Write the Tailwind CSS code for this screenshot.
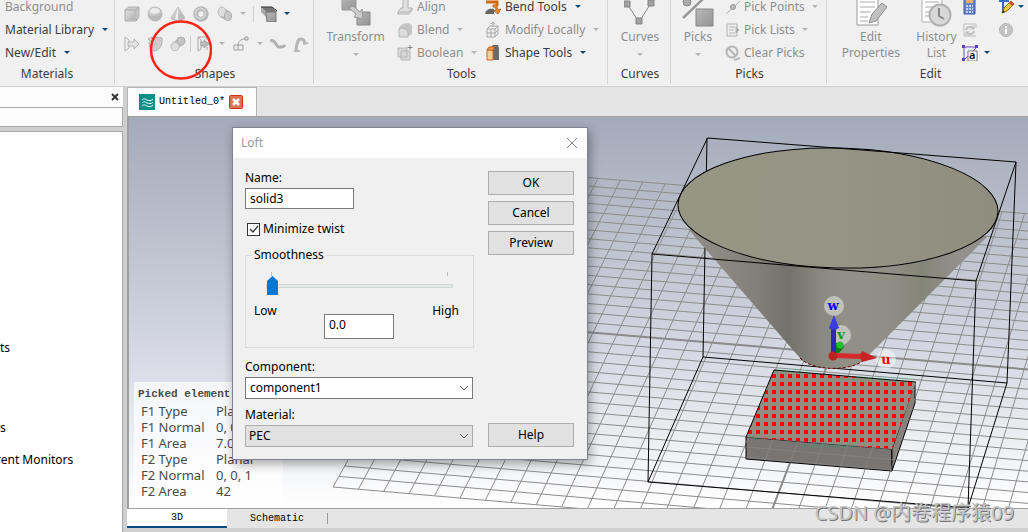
<!DOCTYPE html>
<html lang="en">
<head>
<meta charset="utf-8">
<title>Untitled_0</title>
<script src="https://cdn.jsdelivr.net/npm/@tailwindcss/browser@4"></script>
</head>
<body class="font-['Noto_Sans',sans-serif] text-xs text-[#3c3c3c]">
<svg class="absolute size-0" aria-hidden="true">
  <defs>
    <linearGradient id="g" x1="0" y1="0" x2="1" y2="1"><stop offset="0" stop-color="#dedede"/><stop offset="1" stop-color="#b0b0b0"/></linearGradient>
    <linearGradient id="gd" x1="0" y1="0" x2="1" y2="1"><stop offset="0" stop-color="#b8b8b8"/><stop offset="1" stop-color="#949494"/></linearGradient>
    <symbol id="caret" viewBox="0 0 6 4"><path d="M0 0h6L3 3z" fill="currentColor"/></symbol>
  </defs>
</svg>
<div class="relative flex h-screen flex-col overflow-hidden bg-[#cfcfcf]">

  <!-- Ribbon -->
  <header class="flex h-[87px] shrink-0 items-end overflow-hidden border-b border-[#d0d0d0] bg-[#f0f0f0] pb-0.5 whitespace-nowrap">
    <section class="flex w-[115px] shrink-0 flex-col border-r border-[#d4d4d4]">
      <button class="flex h-[23px] items-center pl-[5px] text-[#8e8e8e]">Background</button>
      <button class="flex h-[23px] items-center gap-2 pl-[5px]">Material Library <svg class="h-1 w-1.5 text-[#0b4a73]"><use href="#caret"/></svg></button>
      <button class="flex h-[23px] items-center gap-2 pl-[5px]">New/Edit <svg class="h-1 w-1.5 text-[#0b4a73]"><use href="#caret"/></svg></button>
      <h2 class="h-5 pr-5 text-center leading-5">Materials</h2>
    </section>

    <section class="flex w-[199px] shrink-0 flex-col border-r border-[#d4d4d4]">
      <div class="flex h-[30px] items-center gap-[7px] pl-[9px]">
        <button aria-label="Brick"><svg class="size-4" viewBox="0 0 16 16"><path d="M1 4l4-3h10v10l-3 4H1z" fill="#ccc" stroke="#adadad"/><path d="M2 5h9v9H2z" fill="url(#g)"/><path d="M1 4h11v11M12 4l3-3" fill="none" stroke="#aaa"/></svg></button>
        <button aria-label="Sphere"><svg class="size-4" viewBox="0 0 16 16"><circle cx="8" cy="8" r="7" fill="url(#g)" stroke="#b8b8b8"/><path d="M1 8c3 3 11 3 14 0-1 9-13 9-14 0z" fill="#b8b8b8"/><ellipse cx="8" cy="5" rx="5" ry="3" fill="#ececec"/></svg></button>
        <button aria-label="Cone"><svg class="size-4" viewBox="0 0 16 16"><path d="M8 1l7 11c-2 3-12 3-14 0z" fill="url(#g)" stroke="#bdbdbd"/><path d="M8 1L5 13l3 1z" fill="#efefef"/></svg></button>
        <button aria-label="Torus"><svg class="size-4" viewBox="0 0 16 16"><circle cx="8" cy="8" r="5.200" fill="none" stroke="#b6b6b6" stroke-width="5"/><circle cx="7.500" cy="7.500" r="5" fill="none" stroke="#d2d2d2" stroke-width="2"/></svg></button>
        <button aria-label="Cylinder" class="ml-px"><svg class="size-4" viewBox="0 0 16 16"><path d="M5 1l7 4c4 4 0 10-4 9L3 11z" fill="#bdbdbd"/><ellipse cx="5" cy="6" rx="4" ry="5" fill="#ddd" stroke="#bbb"/><ellipse cx="11" cy="10" rx="3.500" ry="4.500" fill="#c9c9c9" stroke="#b0b0b0"/></svg></button>
        <svg class="h-1 w-1.5 text-[#b5b5b5]"><use href="#caret"/></svg>
        <i class="h-4 w-px bg-[#cfcfcf]"></i>
        <button aria-label="Extrude face" class="flex items-center gap-[7px]"><svg class="size-4" viewBox="0 0 16 16"><path d="M0 1h11l5 5H5z" fill="#777"/><path d="M0 1l5 5v5L0 6z" fill="#aaa"/><path d="M5 6h10v10H6z" fill="url(#gd)" stroke="#777"/><path d="M0 1h11l5 4" fill="none" stroke="#333"/></svg><svg class="h-1 w-1.5 text-[#0b4a73]"><use href="#caret"/></svg></button>
      </div>
      <div class="flex h-[30px] items-center gap-[7px] pl-[9px]">
        <button aria-label="Extrude"><svg class="size-4" viewBox="0 0 16 16" fill="none" stroke="#b0b0b0"><path d="M1 1l4 3v8l-4 3z"/><path d="M4 6h6V3l5 5-5 5v-3H4z" fill="#e4e4e4"/></svg></button>
        <button aria-label="Rotate"><svg class="size-4" viewBox="0 0 16 16" fill="#cdcdcd" stroke="#b4b4b4"><path d="M2 6c1 4 5 4 6 1V4H6l4-3 5 1v5c-2 8-9 10-12 6z"/><path d="M1 3l4-2 2 2-3 3z"/></svg></button>
        <button aria-label="Loft"><svg class="size-4" viewBox="0 0 16 16"><path d="M2 7l7-5 5 6-7 5z" fill="#b8b8b8"/><circle cx="11" cy="5" r="4" fill="#c6c6c6" stroke="#acacac"/><circle cx="5" cy="10.500" r="4.200" fill="#dedede" stroke="#bababa"/></svg></button>
        <i class="-mx-[3px] h-4 w-px bg-[#cfcfcf]"></i>
        <button aria-label="Shell" class="flex items-center gap-2"><svg class="size-4" viewBox="0 0 16 16" fill="none" stroke="#a8a8a8"><path d="M3 1v14l3-2V4zM3 1h9v3M12 11v3"/><path d="M6 6h3V4l5 4-5 4v-2H6z" fill="#bbb"/></svg><svg class="h-1 w-1.5 text-[#b5b5b5]"><use href="#caret"/></svg></button>
        <button aria-label="Curve sweep" class="ml-px flex items-center gap-2"><svg class="size-4" viewBox="0 0 16 16" fill="none" stroke="#9e9e9e"><path d="M5 10c0-5 3-7 7-7M1 9h9v5H1zM5 9v5"/><path d="M12 1h3v3h-3z" fill="#ddd"/></svg><svg class="h-1 w-1.5 text-[#b5b5b5]"><use href="#caret"/></svg></button>
        <button aria-label="Wire"><svg class="size-4" viewBox="0 0 16 16" fill="none"><path d="M0 5c5-3 6 6 9 6 3 0 5 0 6-2" stroke="#b0b0b0" stroke-width="3"/></svg></button>
        <button aria-label="Bond wire"><svg class="size-4" viewBox="0 0 16 16" fill="none"><path d="M3 14C4 6 5 3 8 3c3 0 3 2 4 4" stroke="#b4b4b4" stroke-width="3"/><path d="M1 15h6M10 8l5-1" stroke="#bbb" stroke-width="2"/></svg></button>
      </div>
      <div class="h-[5px]"></div>
      <h2 class="h-5 pl-0.5 text-center leading-5">Shapes</h2>
    </section>

    <section class="flex w-[294px] shrink-0 flex-col border-r border-[#d4d4d4]">
      <div class="flex text-[#8e8e8e]">
        <button class="flex h-[69px] w-[83px] flex-col items-center leading-4">
          <svg class="h-8 w-8" viewBox="0 0 32 32"><path d="M2 1h14v14H2z" fill="url(#gd)" stroke="#999"/><path d="M17 17h13v13H17z" fill="url(#gd)" stroke="#888"/><path d="M13 11l7 6 2-3 1 10-9-2 2-3-7-6z" fill="#ccc" stroke="#999"/></svg>
          <span class="mt-0.5">Transform</span> <svg class="mt-2 h-1 w-1.5 text-[#b5b5b5]"><use href="#caret"/></svg></button>
        <div class="w-[88px]">
          <button class="flex h-[23px] items-center gap-1"><svg class="size-4" viewBox="0 0 16 16" fill="#e0e0e0" stroke="#b0b0b0"><path d="M6 0v9H4l-3 4v2h11l3-4V9h-4V0z"/><path d="M1 13h11l3-4"/></svg>Align</button>
          <button class="flex h-[23px] items-center gap-1"><svg class="size-4" viewBox="0 0 16 16"><path d="M2 6c2-5 9-6 13-3v9l-5 3H2z" fill="#c4c4c4"/><path d="M2 7c3-2 7-1 9 3v5H2z" fill="#dcdcdc" stroke="#b4b4b4"/></svg>Blend<svg class="ml-1 h-1 w-1.5 text-[#b5b5b5]"><use href="#caret"/></svg></button>
          <button class="flex h-[23px] items-center gap-1"><svg class="size-4" viewBox="0 0 16 16" fill="#d8d8d8" stroke="#b8b8b8"><path d="M1 3h9v9H1zM4 6h9v9H4z"/><path d="M13 0v5M10.500 2.500h5" stroke="#888"/></svg>Boolean<svg class="ml-1 h-1 w-1.5 text-[#b5b5b5]"><use href="#caret"/></svg></button>
        </div>
        <div>
          <button class="flex h-[23px] items-center gap-1 text-[#3c3c3c]"><svg class="size-4" viewBox="0 0 16 16"><path d="M0 15c1-5 5-6 9-5v5z" fill="#666"/><path d="M1 3h11v4" fill="none" stroke="#d06b10" stroke-width="3"/><path d="M8 6c4-1 5 3 5 5l3-1-3 5-4-3 2-1c0-2-1-3-3-3z" fill="#e98a2b" stroke="#a8500b" stroke-width=".7"/></svg>Bend Tools<svg class="ml-1 h-1 w-1.5 text-[#0b4a73]"><use href="#caret"/></svg></button>
          <button class="flex h-[23px] items-center gap-1"><svg class="size-4" viewBox="0 0 16 16" fill="none" stroke="#a8a8a8"><path d="M2 7h8v8H2zM2 7l3-3h8v8l-3 3M10 7l3-3M2 11h8l3-3M6 7v8M8 0v5M6 2l2-2 2 2"/></svg>Modify Locally<svg class="ml-1 h-1 w-1.5 text-[#b5b5b5]"><use href="#caret"/></svg></button>
          <button class="flex h-[23px] items-center gap-1 text-[#3c3c3c]"><svg class="size-4" viewBox="0 0 16 16"><path d="M6 2l2-2h5l1 3v12H8z" fill="#6b6b6b"/><path d="M2 5h6v10H2z" fill="#f4cf95" stroke="#d2691e"/><path d="M2 5l2-3h6L8 5z" fill="#f2a04e" stroke="#c85f12"/></svg>Shape Tools<svg class="ml-1 h-1 w-1.5 text-[#0b4a73]"><use href="#caret"/></svg></button>
        </div>
      </div>
      <h2 class="h-5 pl-0.5 text-center leading-5">Tools</h2>
    </section>

    <section class="flex w-[63px] shrink-0 flex-col border-r border-[#d4d4d4]">
      <button class="flex h-[69px] flex-col items-center pl-0.5 leading-4 text-[#8e8e8e]">
        <svg class="h-8 w-8" viewBox="0 0 32 32" fill="#a2a2a2" stroke="#858585"><path d="M3 9l12 18L27 8" fill="none"/><path d="M0 6h6v6H0zM24 5h6v6h-6zM12 23h6v6h-6z"/></svg>
        <span class="mt-0.5">Curves</span> <svg class="mt-2 h-1 w-1.5 text-[#b5b5b5]"><use href="#caret"/></svg></button>
      <h2 class="h-5 pl-0.5 text-center leading-5">Curves</h2>
    </section>

    <section class="flex w-[156px] shrink-0 flex-col border-r border-[#d4d4d4]">
      <div class="flex text-[#8e8e8e]">
        <button class="flex h-[69px] w-[54px] flex-col items-center leading-4">
          <svg class="h-8 w-8" viewBox="0 0 32 32"><path d="M1 23L22 3" stroke="#999" stroke-width="2.500"/><circle cx="5" cy="7" r="4" fill="#aaa" stroke="#888"/><path d="M14 14h17v17H14z" fill="url(#gd)" stroke="#888"/></svg>
          <span class="mt-0.5">Picks</span> <svg class="mt-2 h-1 w-1.5 text-[#b5b5b5]"><use href="#caret"/></svg></button>
        <div>
          <button class="flex h-[23px] items-center gap-[3px]"><svg class="size-4" viewBox="0 0 16 16"><path d="M1 15L15 2" stroke="#b0b0b0"/><circle cx="8" cy="8" r="2.500" fill="#bbb" stroke="#999"/></svg>Pick Points<svg class="ml-1 h-1 w-1.5 text-[#b5b5b5]"><use href="#caret"/></svg></button>
          <button class="flex h-[23px] items-center gap-[3px]"><svg class="size-4" viewBox="0 0 16 16" fill="#eee" stroke="#b4b4b4"><path d="M2 2h10v12H2zM4 5h6M4 8h5M4 11h6"/><path d="M11 5l3 3-3 3z" fill="#aaa"/></svg>Pick Lists<svg class="ml-1 h-1 w-1.5 text-[#b5b5b5]"><use href="#caret"/></svg></button>
          <button class="flex h-[23px] items-center gap-[3px]"><svg class="size-4" viewBox="0 0 16 16" fill="none"><path d="M9 15l6-2" stroke="#bbb" stroke-width="2"/><circle cx="7" cy="7" r="5.500" fill="#eee" stroke="#b4b4b4" stroke-width="2"/><path d="M3 3l8 8" stroke="#b4b4b4" stroke-width="2"/></svg>Clear Picks</button>
        </div>
      </div>
      <h2 class="h-5 pl-0.5 text-center leading-5">Picks</h2>
    </section>

    <section class="flex w-[207px] shrink-0 flex-col">
      <div class="flex text-center leading-4 text-[#8e8e8e]">
        <button class="flex h-[69px] w-[88px] flex-col items-center">
          <svg class="h-8 w-8" viewBox="0 0 32 32"><path d="M2 1h21v29H2z" fill="#fff" stroke="#999"/><path d="M5 7h15M5 12h15M5 17h11M5 22h8M5 26h8" stroke="#aaa"/><path d="M14 28l3-9L27 8l5 4-11 14z" fill="#c0c0c0" stroke="#8c8c8c"/></svg>
          <span class="mt-0.5">Edit<br>Properties</span></button>
        <button class="flex h-[69px] w-11 flex-col items-center">
          <svg class="h-8 w-8" viewBox="0 0 32 32"><path d="M2 1h20v26H2z" fill="#fff" stroke="#b0b0b0"/><path d="M5 7h14M5 12h10M5 17h5M5 21h5" stroke="#aaa"/><circle cx="20" cy="20" r="10.500" fill="#d8d8d8" stroke="#b0b0b0" stroke-width="2"/><path d="M19 13v8l5 3" fill="none" stroke="#888" stroke-width="2"/></svg>
          <span class="mt-0.5">History<br>List</span></button>
        <div class="grid grid-cols-2 gap-x-4 pl-1">
          <button aria-label="Calculator" class="flex h-[23px] items-center"><svg class="size-4" viewBox="0 0 16 16"><path d="M2 0h11v15H2z" fill="#6683c4" stroke="#43599a"/><path d="M4 1h7v3H4z" fill="#f2b066"/><path d="M4 7h7M4 10h7M4 13h7" stroke="#e4ebfb" stroke-width="1.500" stroke-dasharray="2 1"/></svg></button>
          <button aria-label="Edit text" class="-ml-2 flex h-[23px] items-center gap-1"><svg class="size-4 shrink-0" viewBox="0 0 16 16"><path d="M1 2h10M5 2v10" stroke="#356ac1" stroke-width="2"/><path d="M4 14l2-5 7-7 3 3-7 7z" fill="#f0c93a" stroke="#8c6b20"/><path d="M13 2l3 3-2 2-3-3z" fill="#d4483b"/><path d="M4 14l1-3 2 2z" fill="#222"/></svg><svg class="h-1 w-1.5 shrink-0 text-[#0b4a73]"><use href="#caret"/></svg></button>
          <button aria-label="Update" class="flex h-[23px] items-center"><svg class="size-4" viewBox="0 0 16 16" fill="none" stroke="#bdbdbd"><path d="M2 2v12h12M2 2h12v4"/><path d="M4 8c1-4 6-4 8-1M12 9c-1 4-6 4-8 1" stroke-width="2"/><path d="M12 3v4H8M4 14v-4h4"/></svg></button>
          <button aria-label="Information" class="-ml-2 flex h-[23px] items-center"><svg class="size-4" viewBox="0 0 16 16"><circle cx="8" cy="8" r="6.500" fill="#c4c4c4" stroke="#b4b4b4"/><path d="M8 4v2M7 8h1v4" stroke="#fff" stroke-width="2" fill="none"/></svg></button>
          <button aria-label="Parameters" class="flex h-[23px] items-center gap-1.5"><svg class="size-4 shrink-0" viewBox="0 0 16 16"><path d="M2 2v13M2 2h12M2 15L14 3" stroke="#6b50c8" fill="none"/><path d="M0 0h3v3H0zM13 0h3v3h-3zM0 13h3v3H0z" fill="#5b3ec2"/><path d="M6 6h9v10H6z" fill="#fff" stroke="#777"/><text x="7" y="14" font-size="11" font-weight="600" fill="#111">a</text></svg><svg class="h-1 w-1.5 shrink-0 text-[#0b4a73]"><use href="#caret"/></svg></button>
        </div>
      </div>
      <h2 class="h-5 text-center leading-5">Edit</h2>
    </section>
  </header>

  <main class="flex min-h-0 flex-1">
    <!-- Navigation tree -->
    <aside class="flex w-[123px] shrink-0 flex-col text-black">
      <div class="flex h-5 items-center justify-end bg-[#fcfcfc] pr-1"><button aria-label="Close panel"><svg class="size-2" viewBox="0 0 8 8"><path d="M1 1l6 6M7 1L1 7" stroke="#333" stroke-width="2"/></svg></button></div>
      <input aria-label="Search" class="h-5 w-full border border-l-0 border-[#a8a8a8] bg-[#fcfcfc]">
      <ul class="mt-1 flex-1 overflow-hidden border-t border-r border-[#a8a8a8] bg-white pt-[208px] leading-4 whitespace-nowrap">
        <li class="h-20">ts</li>
        <li class="h-8">s</li>
        <li class="h-4 -indent-1">rent Monitors</li>
      </ul>
    </aside>

    <div class="ml-1 flex min-w-0 flex-1 flex-col">
      <nav class="flex h-[29px] shrink-0 bg-[#e5e5e5]">
        <button class="flex w-[130px] items-center gap-1 border-x border-t border-[#b4b4b4] bg-[#fcfcfc] pl-[11px] font-['Liberation_Mono',monospace] text-[10px] text-black">
          <svg class="size-4" viewBox="0 0 16 16" fill="none"><path d="M0 0h16v16H0z" fill="#0b8f88"/><path d="M3 6c2-2 3-1 5 0s4 1 6-1M3 9c2-2 3-1 5 0s4 1 6-1M3 12c2-2 3-1 5 0s4 1 6-1" stroke="#e8ffff"/></svg>
          Untitled_0*
          <svg class="size-3.5" viewBox="0 0 14 14"><rect x=".5" y=".5" width="13" height="13" rx="1" fill="#dd7350" stroke="#d1321c"/><path d="M4 4l6 6M10 4l-6 6" stroke="#fff" stroke-width="2.500"/></svg>
        </button>
      </nav>

      <!-- 3D view -->
      <div class="relative min-h-0 flex-1 overflow-hidden border-y border-l-2 border-[#a0a0a0] bg-gradient-to-b from-[#a3aab9] via-[#d0d4df] via-55% to-white">
        <svg class="absolute top-0 left-0 h-[391px] w-[899px]" viewBox="129 117 899 391">
          <defs>
            <linearGradient id="cone" gradientUnits="userSpaceOnUse" x1="715" y1="305" x2="958" y2="305">
              <stop offset="0" stop-color="#8d8a82"/><stop offset=".18" stop-color="#827f78"/><stop offset=".3" stop-color="#72716c"/><stop offset=".42" stop-color="#87877d"/><stop offset=".53" stop-color="#919086"/><stop offset=".7" stop-color="#918e86"/><stop offset=".85" stop-color="#85867a"/><stop offset="1" stop-color="#92908a"/>
            </linearGradient>
            <linearGradient id="lid"><stop offset="0" stop-color="#959684"/><stop offset=".5" stop-color="#969485"/><stop offset="1" stop-color="#8f8e7e"/></linearGradient>
            <pattern id="dots" width="8" height="8" patternUnits="userSpaceOnUse" x="780" y="374"><path d="M0 0h4v4H0z" fill="#f00"/></pattern>
            <clipPath id="block"><path d="M774 370l142 12v20l-24 69-146-12v-22z"/></clipPath>
          </defs>
          <path id="grid" fill="none" stroke="#8c8c8c"/>
          <path id="axes" fill="none" stroke="#8c8c8c" stroke-width="2"/>
          <path d="M707 138l-4 219 304 26M1016 162l-9 221-39 125-320-26 55-125" fill="none" stroke="#000"/>
          <path d="M689 230L800 358c12 13 50 14 64 2L988 236z" fill="url(#cone)"/>
          <path d="M800 358c12 13 50 14 64 2" fill="none" stroke="#600" stroke-dasharray="3 2"/>
          <ellipse cx="838" cy="208" rx="160" ry="60" fill="url(#lid)" stroke="#000" transform="rotate(1.300 838 208)"/>
          <path d="M707.500 138L1016 162l-40 119-324-27zM652 254l-4 228M976 281l-8 227" fill="none" stroke="#000"/>
          <path d="M746 437l146 12v22l-146-12z" fill="#797573" stroke="#000"/>
          <path d="M892 449l23-66v20l-23 68z" fill="#858078" stroke="#000"/>
          <path d="M774 370l142 12-24 67-146-12z" fill="#918f81"/>
          <path id="overlay" fill="none" stroke="#8c8c8c" opacity=".6" clip-path="url(#block)"/>
          <path d="M774 370l142 12-24 67-146-12z" fill="url(#dots)"/>
          <path d="M746 437l28-67 142 12" fill="none" stroke="#000"/>
          <g fill="#fff" fill-opacity=".45"><circle cx="834" cy="306" r="10"/><circle cx="841" cy="335" r="10"/><circle cx="886" cy="359" r="10"/></g>
          <path d="M836 353v-10l6 0 2 4-5 6z" fill="#0a7a12"/><circle cx="840" cy="345" r="3.500" fill="#20c030"/>
          <path d="M831 356v-30h5v30z" fill="#2d28b8"/><path d="M834 315l5 13c-3 2-7 2-10 0z" fill="#3b3be6"/>
          <path d="M833 353l30 1v5l-30-1z" fill="#d42a2a"/><path d="M862 351l15 7-15 4c-2-3-2-8 0-11z" fill="#c92222"/><circle cx="833" cy="356" r="4.500" fill="#b82424"/>
          <g font-family="DejaVu Serif, serif" font-weight="700" font-size="13" text-anchor="middle"><text x="833" y="310" fill="#0000f0">w</text><text x="841" y="339" fill="#0a9a10">v</text><text x="886" y="364" fill="#f00">u</text></g>
        </svg>

        <section class="absolute top-[265px] left-[5px] h-[120px] w-[149px] bg-white/70 pt-1 pl-1 whitespace-nowrap text-[#4a4a4a]">
          <h3 class="pb-px font-['Liberation_Mono',monospace] text-[11px] leading-4 font-bold">Picked element</h3>
          <table class="ml-[3px] w-[140px] text-[13px] leading-4">
            <tbody>
              <tr><td class="w-[75px]">F1 Type</td><td>Planar</td></tr>
              <tr><td>F1 Normal</td><td>0, 0, 1</td></tr>
              <tr><td>F1 Area</td><td>7.06858</td></tr>
              <tr><td>F2 Type</td><td>Planar</td></tr>
              <tr><td>F2 Normal</td><td>0, 0, 1</td></tr>
              <tr><td>F2 Area</td><td>42</td></tr>
            </tbody>
          </table>
        </section>
      </div>

      <nav class="mb-1 flex h-[19px] shrink-0 bg-[#e5e5e5] font-['Liberation_Mono',monospace] text-[10px] text-black">
        <button class="w-[100px] border-b-2 border-[#0b4a7c] bg-white">3D</button>
        <button class="w-[100px]">Schematic</button>
        <i class="my-1 w-px bg-[#999]"></i>
      </nav>
    </div>
  </main>

  <!-- Loft dialog -->
  <form class="absolute top-[127px] left-[232px] w-[356px] border border-[#7f8490] bg-[#f0f0f0] text-black shadow-[2px_4px_10px_rgba(0,0,0,0.35)]" role="dialog" aria-labelledby="dlg">
    <div class="flex h-[30px] items-center justify-between bg-white pr-[9px] pl-2 text-[#999]">
      <h1 id="dlg">Loft</h1>
      <button type="button" aria-label="Close"><svg class="size-3" viewBox="0 0 12 12"><path d="M1 1l10 10M11 1L1 11" stroke="#8a8a8a"/></svg></button>
    </div>
    <div class="flex justify-between pt-3 pr-[13px] pb-3 pl-3">
      <div class="flex w-[228px] flex-col leading-4">
        <label for="name">Name:</label>
        <input id="name" value="solid3" class="mt-0.5 h-[21px] w-[109px] border border-[#7a7a7a] bg-white px-1">
        <label class="mt-3 flex items-center gap-[3px] pl-0.5"><span class="grid size-[13px] shrink-0"><input type="checkbox" checked class="col-start-1 row-start-1 size-[13px] appearance-none border border-[#333] bg-white"><svg class="pointer-events-none col-start-1 row-start-1 size-[13px]" viewBox="0 0 13 13"><path d="M3 6l3 3 5-6" fill="none" stroke="#333" stroke-width="1.300"/></svg></span>Minimize twist</label>
        <fieldset class="mt-2.5 h-[101px] border border-[#dcdcdc] px-2">
          <legend class="-ml-0.5 px-0.5">Smoothness</legend>
          <div class="mx-[17px] mt-[9px] flex h-1 justify-between"><i class="w-px bg-[#bbb]"></i><i class="w-px bg-[#bbb]"></i></div>
          <input type="range" min="0" max="100" value="0" aria-label="Smoothness" class="mx-3 block h-5 w-[187px] appearance-none bg-transparent [&::-webkit-slider-runnable-track]:h-1 [&::-webkit-slider-runnable-track]:border [&::-webkit-slider-runnable-track]:border-[#d2d6d6] [&::-webkit-slider-runnable-track]:bg-[#e7eaea] [&::-webkit-slider-thumb]:-mt-[9px] [&::-webkit-slider-thumb]:h-[19px] [&::-webkit-slider-thumb]:w-[11px] [&::-webkit-slider-thumb]:appearance-none [&::-webkit-slider-thumb]:bg-[#0078d7] [&::-webkit-slider-thumb]:[clip-path:polygon(50%_0,100%_26%,100%_100%,0_100%,0_26%)]">
          <div class="mt-[7px] flex items-start pr-[6px]">
            <span class="w-[70px]">Low</span>
            <input aria-label="Smoothness value" value="0.0" class="mt-[11px] h-[25px] w-[70px] border border-[#7a7a7a] bg-white px-1 pb-1">
            <span class="ml-auto">High</span>
          </div>
        </fieldset>
        <label for="comp" class="mt-[11px]">Component:</label>
        <div class="mt-0.5 grid">
          <select id="comp" class="col-start-1 row-start-1 h-[22px] appearance-none border border-[#7a7a7a] bg-white px-1"><option>component1</option></select>
          <svg class="pointer-events-none col-start-1 row-start-1 mr-1 size-2.5 self-center justify-self-end" viewBox="0 0 10 10"><path d="M1 3l4 4 4-4" fill="none" stroke="#555"/></svg>
        </div>
        <label for="mat" class="mt-2">Material:</label>
        <div class="mt-0.5 grid">
          <select id="mat" class="col-start-1 row-start-1 h-[22px] appearance-none border border-[#adadad] bg-[#e1e1e1] px-[3px]"><option>PEC</option></select>
          <svg class="pointer-events-none col-start-1 row-start-1 mr-1 size-2.5 self-center justify-self-end" viewBox="0 0 10 10"><path d="M1 3l4 4 4-4" fill="none" stroke="#555"/></svg>
        </div>
      </div>
      <div class="flex w-[86px] flex-col gap-1.5 pt-px">
        <button type="button" class="h-6 border border-[#adadad] bg-[#e1e1e1]">OK</button>
        <button type="button" class="h-6 border border-[#adadad] bg-[#e1e1e1]">Cancel</button>
        <button type="button" class="h-6 border border-[#adadad] bg-[#e1e1e1]">Preview</button>
        <button type="button" class="mt-auto h-6 border border-[#adadad] bg-[#e1e1e1]">Help</button>
      </div>
    </div>
  </form>

  <!-- Annotation ring and watermark -->
  <svg class="pointer-events-none absolute top-[18px] left-[148px] h-16 w-16" viewBox="0 0 64 64"><ellipse cx="33" cy="32" rx="30" ry="28.500" fill="none" stroke="#fb2418" stroke-width="2.500"/></svg>
  <p class="absolute right-[14px] bottom-[5px] font-['Noto_Sans','Noto_Sans_CJK_SC',sans-serif] text-[20px] leading-7 whitespace-nowrap text-[#c4c4c4] [text-shadow:1px_1px_0_#777]">CSDN @内卷程序猿09</p>
</div>

<script>
  // Ground plane: 34 x 34 cells projected through the quad of its four corners.
  const [p0, p1, p2, p3] = [[333, 487], [1205, 563], [1274, 234], [509, 171]];
  const sx = p0[0] - p1[0] + p2[0] - p3[0], sy = p0[1] - p1[1] + p2[1] - p3[1];
  const dx1 = p1[0] - p2[0], dy1 = p1[1] - p2[1], dx2 = p3[0] - p2[0], dy2 = p3[1] - p2[1];
  const det = dx1 * dy2 - dx2 * dy1;
  const g = (sx * dy2 - dx2 * sy) / det, h = (dx1 * sy - sx * dy1) / det;
  const project = (u, v) => {
    const w = g * u + h * v + 1;
    const x = (p1[0] - p0[0] + g * p1[0]) * u + (p3[0] - p0[0] + h * p3[0]) * v + p0[0];
    const y = (p1[1] - p0[1] + g * p1[1]) * u + (p3[1] - p0[1] + h * p3[1]) * v + p0[1];
    return (x / w).toFixed(1) + ' ' + (y / w).toFixed(1);
  };
  const line = t => `M${project(t, 0)}L${project(t, 1)}M${project(0, t)}L${project(1, t)}`;
  let d = '';
  for (let i = 0; i <= 34; i++) d += line(i / 34);
  document.getElementById('grid').setAttribute('d', d);
  document.getElementById('overlay').setAttribute('d', d);
  document.getElementById('axes').setAttribute('d', line(0.5));
</script>
</body>
</html>
